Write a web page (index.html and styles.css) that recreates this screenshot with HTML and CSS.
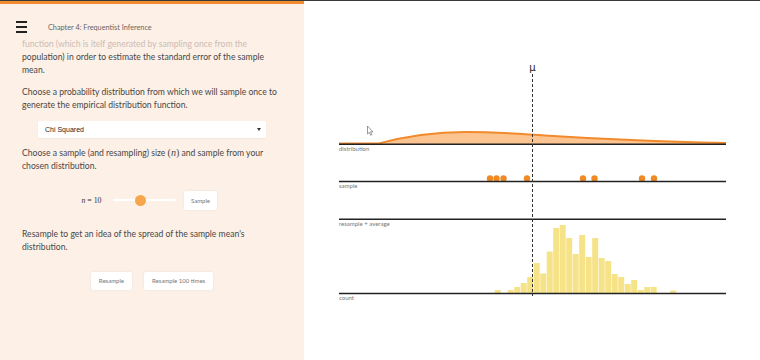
FILE: index.html
```html
<!DOCTYPE html>
<html>
<head>
<meta charset="utf-8">
<link rel="stylesheet" href="styles.css">
</head>
<body>
<aside class="sidebar">
  <header class="header">
    <div class="menu"><span></span><span></span><span></span></div>
    <span class="title">Chapter 4: Frequentist Inference</span>
  </header>
  <div class="content">
    <p class="first"><span class="faded">function (which is itelf generated by sampling once from the</span> population) in order to estimate the standard error of the sample mean.</p>
    <p>Choose a probability distribution from which we will sample once to generate the empirical distribution function.</p>
    <div class="select"><span>Chi Squared</span><span class="caret"></span></div>
    <p>Choose a sample (and resampling) size <span class="math">(<i>n</i>)</span> and sample from your chosen distribution.</p>
    <div class="row slider-row">
      <span class="nlabel"><i>n</i> = 10</span>
      <div class="slider"><span class="thumb"></span></div>
      <button class="btn">Sample</button>
    </div>
    <p>Resample to get an idea of the spread of the sample mean's distribution.</p>
    <div class="row buttons">
      <button class="btn">Resample</button>
      <button class="btn">Resample 100 times</button>
    </div>
  </div>
</aside>
<main class="main">
  <svg class="chart" width="456" height="359" viewBox="304 1 456 359">
    <text class="mu" x="532.5" y="71">μ</text>
    <path d="M339 144 L378 144 C405 136.5 430 132 465 132 C500 132 520 134 545 135.5 C600 139 660 141.5 726 143 L726 144 Z" fill="#fcc490"/>
    <path d="M339 143.6 L378 143.6 C405 136.5 430 132 465 132 C500 132 520 134 545 135.5 C600 139 660 141.5 726 143" fill="none" stroke="#f28a2c" stroke-width="2"/>
    <line x1="339" y1="144.2" x2="726" y2="144.2" class="axis"/>
    <text class="lbl" x="339" y="150.5">distribution</text>

    <g fill="#f08a24">
      <circle cx="490" cy="178.5" r="3.2"/>
      <circle cx="496.5" cy="178.5" r="3.2"/>
      <circle cx="503.5" cy="178.5" r="3.2"/>
      <circle cx="527" cy="178.5" r="3.2"/>
      <circle cx="583" cy="178.5" r="3.2"/>
      <circle cx="594.5" cy="178.5" r="3.2"/>
      <circle cx="642" cy="178.5" r="3.2"/>
      <circle cx="654" cy="178.5" r="3.2"/>
    </g>
    <line x1="339" y1="181.6" x2="726" y2="181.6" class="axis"/>
    <text class="lbl" x="339" y="188">sample</text>

    <line x1="339" y1="219.3" x2="726" y2="219.3" class="axis"/>
    <text class="lbl" x="339" y="225.5">resample + average</text>

    <g fill="#f7e387">
      <rect x="494.7" y="290" width="6" height="3"/>
      <rect x="507.7" y="290" width="6" height="3"/>
      <rect x="514.2" y="287" width="6" height="6"/>
      <rect x="520.7" y="283" width="6" height="10"/>
      <rect x="527.2" y="277" width="6" height="16"/>
      <rect x="533.7" y="263" width="6" height="30"/>
      <rect x="540.2" y="273.5" width="6" height="19.5"/>
      <rect x="546.7" y="251.5" width="6" height="41.5"/>
      <rect x="553.2" y="228" width="6" height="65"/>
      <rect x="559.7" y="225" width="6" height="68"/>
      <rect x="566.2" y="238" width="6" height="55"/>
      <rect x="572.7" y="254" width="6" height="39"/>
      <rect x="579.2" y="235" width="6" height="58"/>
      <rect x="585.7" y="257" width="6" height="36"/>
      <rect x="592.2" y="238" width="6" height="55"/>
      <rect x="598.7" y="258" width="6" height="35"/>
      <rect x="605.2" y="261" width="6" height="32"/>
      <rect x="611.7" y="274" width="6" height="19"/>
      <rect x="618.2" y="277" width="6" height="16"/>
      <rect x="624.7" y="284" width="6" height="9"/>
      <rect x="631.2" y="280" width="6" height="13"/>
      <rect x="637.7" y="290" width="6" height="3"/>
      <rect x="644.2" y="287" width="6" height="6"/>
      <rect x="650.7" y="287" width="6" height="6"/>
      <rect x="670.2" y="290.5" width="6" height="2.5"/>
    </g>
    <line x1="339" y1="293.5" x2="726" y2="293.5" class="axis"/>
    <text class="lbl" x="339" y="300">count</text>

    <line x1="532.5" y1="74" x2="532.5" y2="296" stroke="#333" stroke-width="1" stroke-dasharray="3 2"/>

    <path d="M367.5 126 L367.5 134 L369.3 132.3 L370.6 135.2 L371.8 134.7 L370.6 131.9 L373 131.9 Z" fill="#fff" stroke="#555" stroke-width="0.6"/>
  </svg>
</main>
</body>
</html>
```
FILE: styles.css
```css
html, body {
  margin: 0;
  padding: 0;
}

body {
  border-top: 1px solid #3a3a3a;
  display: flex;
  height: 359px;
  overflow: hidden;
  background: #fff;
  font-family: Lato, "Open Sans", sans-serif;
}

.sidebar {
  flex: none;
  width: 304px;
  height: 359px;
  box-sizing: border-box;
  background: #fdf0e6;
  border-top: 3px solid #f08b2e;
}

.header {
  display: flex;
  align-items: center;
  height: 22px;
  margin-top: 12px;
  padding-left: 16px;
}

.menu {
  flex: none;
  width: 11px;
  display: flex;
  flex-direction: column;
  gap: 3.5px;
  margin-right: 21px;
}

.menu span {
  display: block;
  height: 1.5px;
  background: #222;
}

.title {
  font-size: 7.3px;
  color: #666;
}

.content {
  padding: 0 22px;
  color: #474747;
  font-size: 8.6px;
  line-height: 13px;
}

.content p {
  margin: 9px 0;
}

.content p.first {
  margin-top: 0;
}

.faded {
  color: #cbbcb5;
}

.math {
  font-family: "Liberation Serif", serif;
  font-size: 10px;
  line-height: 1;
}

.select {
  margin: 9px 16px;
  height: 16.5px;
  background: #fff;
  box-shadow: 0 1px 2px rgba(0, 0, 0, 0.05);
  display: flex;
  align-items: center;
  justify-content: space-between;
  padding: 0 5px 0 7px;
  font-family: "Liberation Sans", Arial, sans-serif;
  font-size: 7px;
  color: #222;
}

.caret {
  width: 0;
  height: 0;
  border-left: 2px solid transparent;
  border-right: 2px solid transparent;
  border-top: 3px solid #333;
}

.row {
  display: flex;
  justify-content: center;
  align-items: center;
  margin: 18px 0;
}

.slider-row {
  gap: 8px;
  padding-right: 6px;
}

.nlabel {
  font-family: "Liberation Serif", serif;
  font-size: 7.8px;
  color: #333;
  margin-right: 4px;
}

.slider {
  position: relative;
  width: 63px;
  height: 2px;
  background: #fff;
  border-radius: 1px;
}

.thumb {
  position: absolute;
  left: 21.5px;
  top: -4.5px;
  width: 11px;
  height: 11px;
  border-radius: 50%;
  background: #f7a64e;
}

.buttons {
  gap: 12px;
}

.btn {
  display: flex;
  align-items: center;
  justify-content: center;
  height: 19px;
  padding: 0 6.5px;
  border: none;
  border-radius: 2px;
  background: #fff;
  box-shadow: 0 0 3px rgba(0, 0, 0, 0.07);
  font-family: Lato, sans-serif;
  font-size: 6px;
  color: #777;
}

.buttons .btn {
  height: 18px;
  padding: 0 8px;
}

.main {
  flex: 1;
}

.chart {
  display: block;
}

.axis {
  stroke: #222;
  stroke-width: 1.5;
}

.lbl {
  font-family: Lato, sans-serif;
  font-size: 6px;
  fill: #777;
}

.mu {
  font-family: "DejaVu Sans", sans-serif;
  font-size: 10px;
  fill: #222;
  text-anchor: middle;
}
```
